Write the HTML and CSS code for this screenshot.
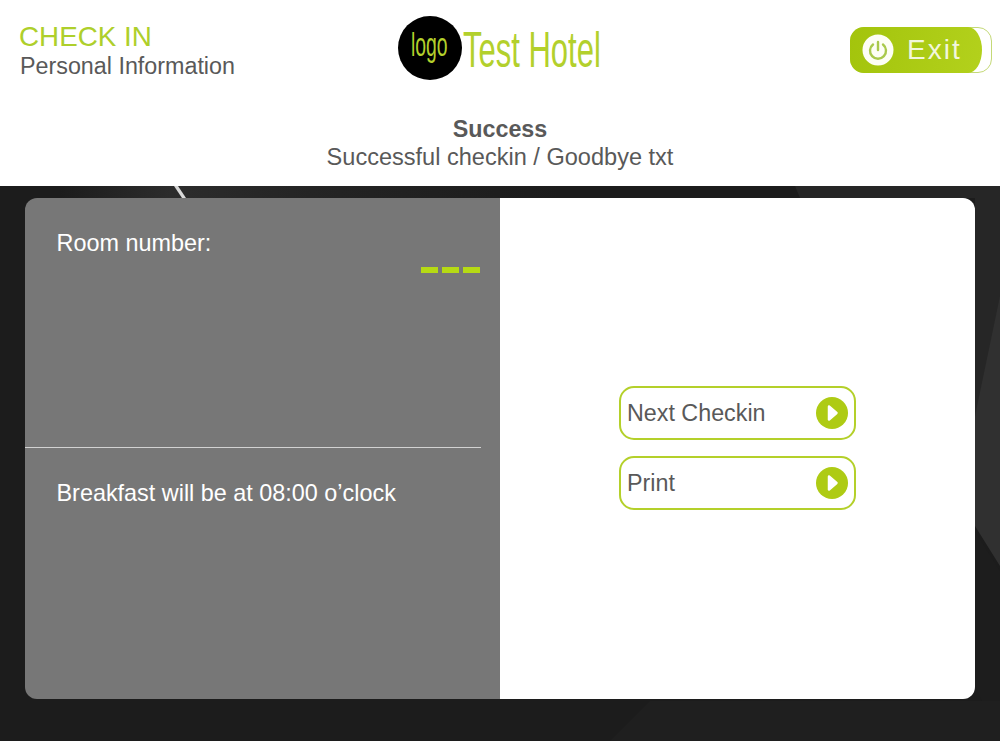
FILE: index.html
```html
<!DOCTYPE html>
<html lang="en">
<head>
  <meta charset="UTF-8" />
  <title>Test Hotel - Check in</title>
  <link rel="stylesheet" href="styles.css">
</head>
<body>
  <header>
    <div class="top-row">
      <div class="page-title">
        <h1>CHECK IN</h1>
        <p>Personal Information</p>
      </div>
      <div class="brand">
        <div class="brand-logo"><span>logo</span></div>
        <div class="brand-name"><span>Test Hotel</span></div>
      </div>
      <a href="#" class="exit-btn">
        <span class="exit-fill">
          <svg class="power" width="32" height="32" viewBox="0 0 32 32">
            <circle cx="16" cy="16" r="15.5" fill="#fdfef4"/>
            <path d="M11 10.5a8 8 0 1 0 10 0" fill="none" stroke="#a9c94a" stroke-width="2.4" stroke-linecap="round"/>
            <path d="M16 8v8" fill="none" stroke="#a9c94a" stroke-width="2.4" stroke-linecap="round"/>
          </svg>
          <span class="exit-label">Exit</span>
        </span>
      </a>
    </div>
    <div class="message">
      <h2>Success</h2>
      <p>Successful checkin / Goodbye txt</p>
    </div>
  </header>

  <main>
    <!-- background shards -->
    <svg class="bg-art" width="1000" height="555" viewBox="0 0 1000 555">
      <defs>
        <linearGradient id="topGlow" x1="0" x2="1" y1="0" y2="0">
          <stop offset="0" stop-color="#1c1c1c"/>
          <stop offset=".22" stop-color="#2c2c2c"/>
          <stop offset=".5" stop-color="#242424"/>
          <stop offset="1" stop-color="#1c1c1c"/>
        </linearGradient>
      </defs>
      <polygon points="60,0 560,0 560,12 60,12" fill="url(#topGlow)"/>
      <polygon points="795,0 1000,0 1000,200 975,230 975,12 800,12" fill="#262626"/>
      <polygon points="975,230 1000,110 1000,380 975,340" fill="#303030"/>
      <polygon points="975,345 1000,385 1000,555 975,500" fill="#1d1d1d"/>
      <polygon points="610,555 650,515 1000,515 1000,555" fill="#1f1f1f"/>
      <polygon points="174,0 178,0 186,12 182,12" fill="#d8d8d8"/>
    </svg>

    <div class="panel">
      <section class="info">
        <div class="info-block room">
          <p>Room number:</p>
          <div class="dashes"><i></i><i></i><i></i></div>
        </div>
        <div class="info-block">
          <p>Breakfast will be at 08:00 o’clock</p>
        </div>
      </section>
      <section class="actions">
        <a href="#" class="btn">Next Checkin
          <svg width="32" height="32" viewBox="0 0 32 32"><circle cx="16" cy="16" r="16" fill="#aecb14"/><path d="M13 9.5 20.5 16 13 22.5Z" fill="#fff" stroke="#fff" stroke-width="2.5" stroke-linejoin="round"/></svg>
        </a>
        <a href="#" class="btn">Print
          <svg width="32" height="32" viewBox="0 0 32 32"><circle cx="16" cy="16" r="16" fill="#aecb14"/><path d="M13 9.5 20.5 16 13 22.5Z" fill="#fff" stroke="#fff" stroke-width="2.5" stroke-linejoin="round"/></svg>
        </a>
      </section>
    </div>
  </main>
</body>
</html>
```

FILE: styles.css
```css
* {
  box-sizing: border-box;
}
html, body {
  height: 100%;
}
body {
  margin: 0;
  display: flex;
  flex-direction: column;
  overflow: hidden;
  font-family: "Liberation Sans", Arial, sans-serif;
  background: #fff;
  color: #595959;
}
a {
  text-decoration: none;
}

header {
  height: 186px;
  flex-shrink: 0;
  background: #fff;
}
.top-row {
  height: 115px;
  display: grid;
  grid-template-columns: 378px 452px 1fr;
  padding-left: 20px;
}
.page-title {
  padding-top: 21px;
}
.page-title h1 {
  margin: 0 0 0 -1px;
  font-size: 27.8px;
  font-weight: normal;
  line-height: 32px;
  color: #aecf2b;
}
.page-title p {
  margin: 0;
  font-size: 23.3px;
  line-height: 26px;
  color: #595959;
}

.brand {
  display: flex;
  align-items: center;
  height: 96px;
  color: #b3d02c;
}
.brand-logo {
  width: 64px;
  height: 64px;
  border-radius: 50%;
  background: #000;
  flex-shrink: 0;
  overflow: hidden;
  padding: 9px 0 0 13px;
}
.brand-logo span {
  display: block;
  font-size: 34px;
  line-height: 38px;
  transform: scaleX(.57);
  transform-origin: left center;
}
.brand-name {
  width: 137px;
  margin-left: 1px;
  padding-top: 3px;
}
.brand-name span {
  display: block;
  width: 228px;
  font-size: 50px;
  line-height: 58px;
  white-space: nowrap;
  transform: scaleX(.62);
  transform-origin: left center;
}

.exit-btn {
  display: block;
  width: 142px;
  height: 46px;
  margin-top: 27px;
  border: 1px solid #c4d977;
  border-radius: 14px;
  background: #fff;
}
.exit-fill {
  display: flex;
  align-items: center;
  width: 132px;
  height: 46px;
  margin: -1px 0 0 -1px;
  padding-left: 12px;
  border-radius: 14px 14px 14px 14px / 14px 50% 50% 14px;
  background: linear-gradient(100deg, #a3c40c, #b3d11c);
}
.exit-label {
  margin-left: 13px;
  font-size: 28px;
  letter-spacing: 2px;
  color: #f2f6dc;
}

.message {
  text-align: center;
}
.message h2 {
  margin: 0;
  font-size: 23.3px;
  line-height: 28px;
  color: #595959;
}
.message p {
  margin: 1px 0 0;
  font-size: 23.55px;
  line-height: 27px;
}

main {
  position: relative;
  flex: 1;
  padding: 12px 25px 42px;
  background: #1c1c1c;
  overflow: hidden;
}
.bg-art {
  position: absolute;
  top: 0;
  left: 0;
}
.panel {
  position: relative;
  display: flex;
  height: 501px;
  border-radius: 12px;
  overflow: hidden;
}
.info {
  width: 475px;
  background: #777;
  color: #fff;
}
.info-block {
  padding: 31px 0 0 31.5px;
  font-size: 23.4px;
}
.info-block p {
  margin: 0;
  line-height: 28px;
}
.room {
  height: 250px;
  margin-right: 19px;
  border-bottom: 1px solid #d2d2d2;
}
.dashes {
  display: flex;
  justify-content: flex-end;
  gap: 3.5px;
  margin-top: 10px;
  margin-right: 1px;
}
.dashes i {
  width: 17.5px;
  height: 6px;
  background: #b6da14;
}

.actions {
  flex: 1;
  background: #fff;
  display: flex;
  flex-direction: column;
  align-items: center;
  justify-content: center;
  gap: 16px;
  padding-bottom: 1px;
}
.btn {
  display: flex;
  align-items: center;
  justify-content: space-between;
  width: 237px;
  height: 54px;
  padding: 0 6px;
  border: 2px solid #b4d02a;
  border-radius: 15px;
  font-size: 23.3px;
  color: #595959;
}
```
